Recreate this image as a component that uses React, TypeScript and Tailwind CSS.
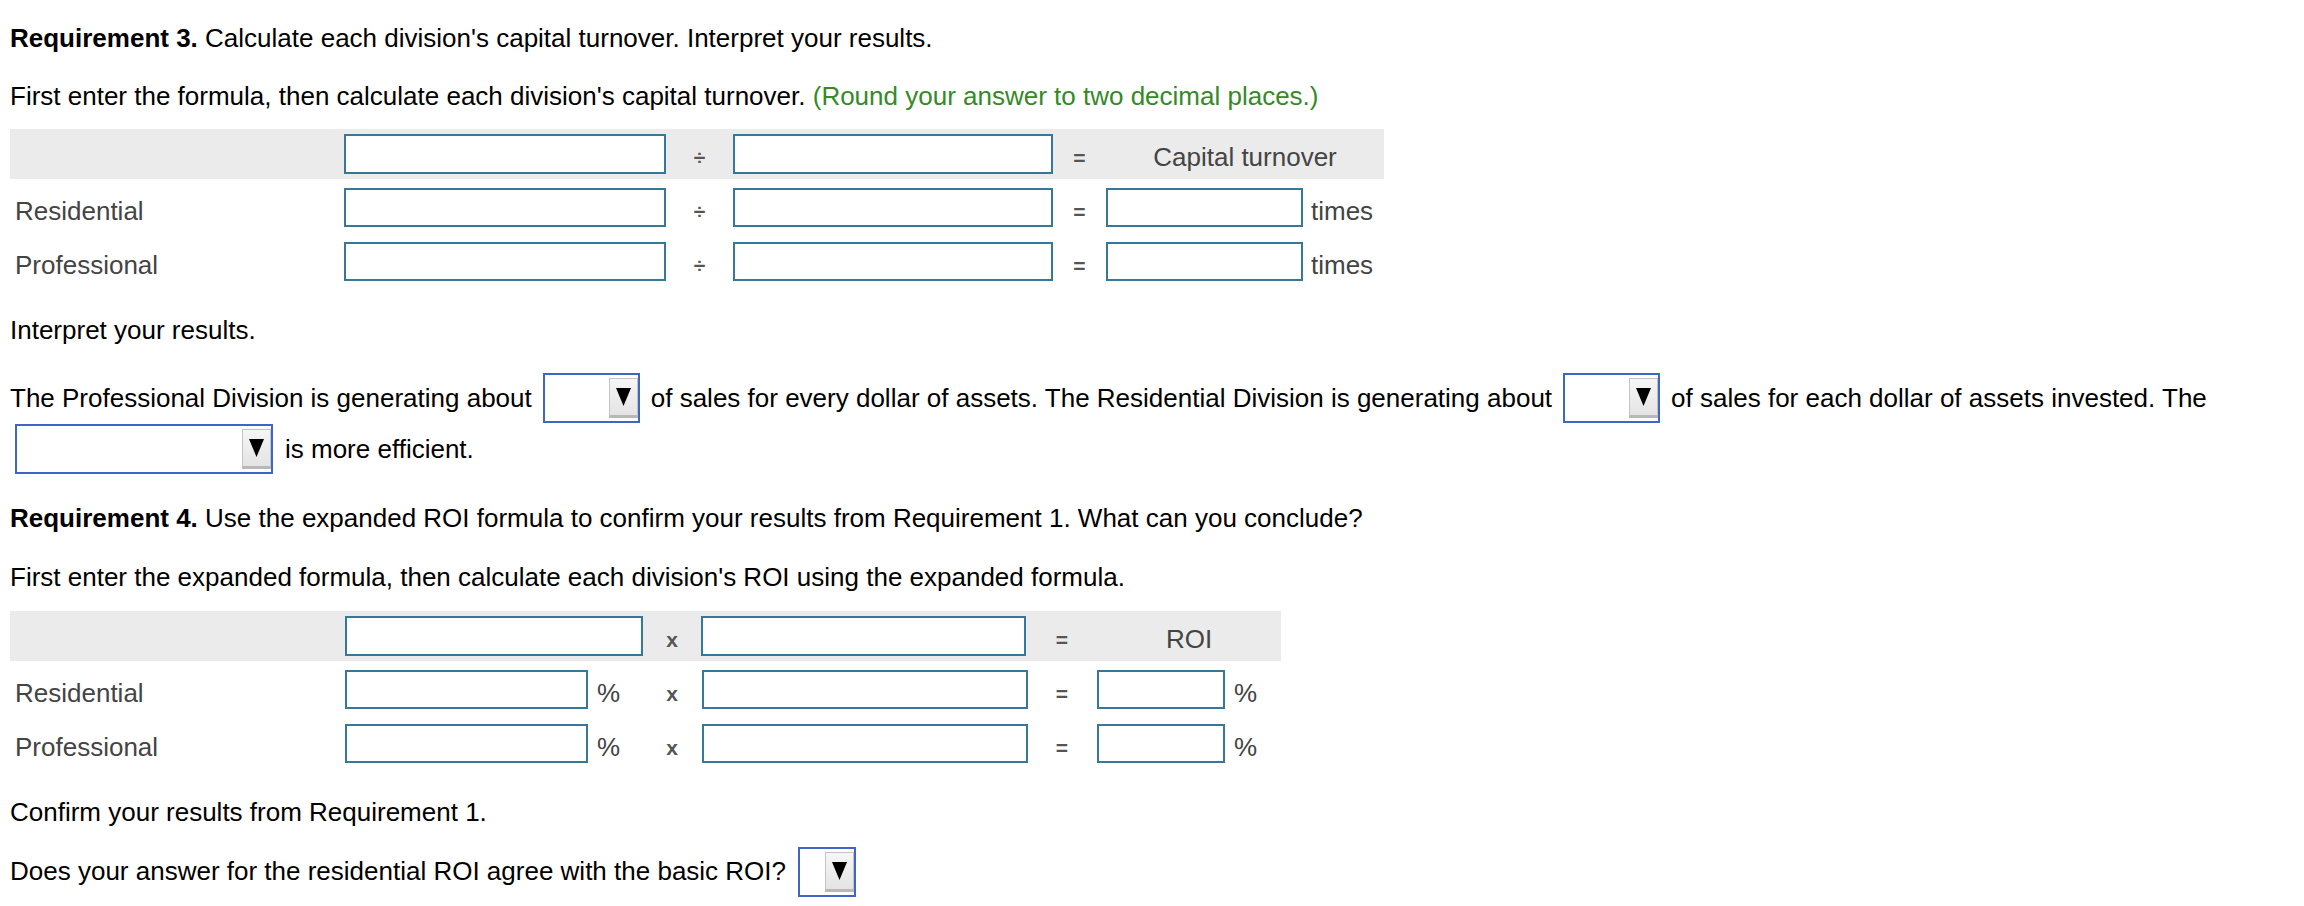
import React from "react";

function Box({ className }: { className: string }) {
  return <div className={"border-2 border-[#35789a] bg-white shrink-0 " + className} />;
}

function Dropdown({ className }: { className: string }) {
  return (
    <div
      className={
        "h-[50px] border-2 border-[#3f66c6] bg-white flex items-center justify-end shrink-0 " +
        className
      }
    >
      <div className="w-[29px] h-[40px] bg-gradient-to-b from-[#f6f6f6] to-[#e4e4e4] border border-[#c4c4c4] border-b-[3px] border-b-[#b8b8b8] flex items-center justify-center">
        <svg width="15" height="18" viewBox="0 0 15 18">
          <path d="M0 0H15L7.5 18Z" fill="#000" />
        </svg>
      </div>
    </div>
  );
}

function Sym({ children }: { children: React.ReactNode }) {
  return <span className="text-[21px] font-bold text-[#555] leading-none">{children}</span>;
}

export default function App() {
  return (
    <div className="w-[2304px] h-[906px] overflow-hidden bg-white pl-[10px] text-[26px] leading-[29px] text-black font-['Liberation_Sans',Arial,Helvetica,sans-serif]">
      <p className="pt-[24px] whitespace-nowrap">
        <b>Requirement 3.</b> Calculate each division's capital turnover. Interpret your results.
      </p>
      <p className="mt-[29px] whitespace-nowrap">
        First enter the formula, then calculate each division's capital turnover.{" "}
        <span className="text-[#348a26]">(Round your answer to two decimal places.)</span>
      </p>

      {/* Table 1 */}
      <div className="mt-[17.5px] w-[1374px] flex flex-col gap-[4px] text-[#444]">
        <div className="grid grid-cols-[334px_322px_67px_320px_53px_278px] h-[50px] bg-[#ebebeb] items-center">
          <div />
          <Box className="w-[322px] h-[40px]" />
          <div className="flex justify-center pt-[7px]">
            <Sym>÷</Sym>
          </div>
          <Box className="w-[320px] h-[40px]" />
          <div className="flex justify-center pt-[7px]">
            <Sym>=</Sym>
          </div>
          <div className="flex justify-center pt-[7px]">Capital turnover</div>
        </div>
        {["Residential", "Professional"].map((label) => (
          <div
            key={label}
            className="grid grid-cols-[334px_322px_67px_320px_53px_278px] h-[50px] items-center"
          >
            <div className="pl-[5px] pt-[7px]">{label}</div>
            <Box className="w-[322px] h-[39px]" />
            <div className="flex justify-center pt-[7px]">
              <Sym>÷</Sym>
            </div>
            <Box className="w-[320px] h-[39px]" />
            <div className="flex justify-center pt-[7px]">
              <Sym>=</Sym>
            </div>
            <div className="flex items-center">
              <Box className="w-[197px] h-[39px]" />
              <span className="ml-[8px] pt-[7px]">times</span>
            </div>
          </div>
        ))}
      </div>

      <p className="mt-[29.5px]">Interpret your results.</p>

      <div className="mt-[27.5px] h-[51px] flex items-center whitespace-nowrap">
        <span>The Professional Division is generating about</span>
        <Dropdown className="w-[97px] mx-[11px]" />
        <span>of sales for every dollar of assets. The Residential Division is generating about</span>
        <Dropdown className="w-[97px] mx-[11px]" />
        <span>of sales for each dollar of assets invested. The</span>
      </div>
      <div className="h-[51px] flex items-center whitespace-nowrap">
        <Dropdown className="w-[258px] ml-[5px] mr-[12px]" />
        <span>is more efficient.</span>
      </div>

      <p className="mt-[29px] whitespace-nowrap">
        <b>Requirement 4.</b> Use the expanded ROI formula to confirm your results from Requirement 1. What can you conclude?
      </p>
      <p className="mt-[30.5px] whitespace-nowrap">
        First enter the expanded formula, then calculate each division's ROI using the expanded formula.
      </p>

      {/* Table 2 */}
      <div className="mt-[18.5px] w-[1271px] flex flex-col gap-[4px] text-[#444]">
        <div className="grid grid-cols-[335px_298px_58px_326px_70px_184px] h-[50px] bg-[#ebebeb] items-center">
          <div />
          <Box className="w-[298px] h-[40px]" />
          <div className="flex justify-center pt-[7px]">
            <Sym>x</Sym>
          </div>
          <Box className="w-[325px] h-[40px]" />
          <div className="flex justify-center pt-[7px]">
            <Sym>=</Sym>
          </div>
          <div className="flex justify-center pt-[7px]">ROI</div>
        </div>
        {["Residential", "Professional"].map((label) => (
          <div
            key={label}
            className="grid grid-cols-[335px_298px_58px_326px_70px_184px] h-[50px] items-center"
          >
            <div className="pl-[5px] pt-[7px]">{label}</div>
            <div className="flex items-center">
              <Box className="w-[243px] h-[39px]" />
              <span className="ml-[9px] pt-[7px]">%</span>
            </div>
            <div className="flex justify-center pt-[7px]">
              <Sym>x</Sym>
            </div>
            <Box className="w-[326px] h-[39px] ml-[1px]" />
            <div className="flex justify-center pt-[7px]">
              <Sym>=</Sym>
            </div>
            <div className="flex items-center">
              <Box className="w-[128px] h-[39px]" />
              <span className="ml-[9px] pt-[7px]">%</span>
            </div>
          </div>
        ))}
      </div>

      <p className="mt-[29.5px]">Confirm your results from Requirement 1.</p>
      <div className="mt-[19px] h-[51px] flex items-center whitespace-nowrap">
        <span>Does your answer for the residential ROI agree with the basic ROI?</span>
        <Dropdown className="w-[58px] ml-[12px]" />
      </div>
    </div>
  );
}
